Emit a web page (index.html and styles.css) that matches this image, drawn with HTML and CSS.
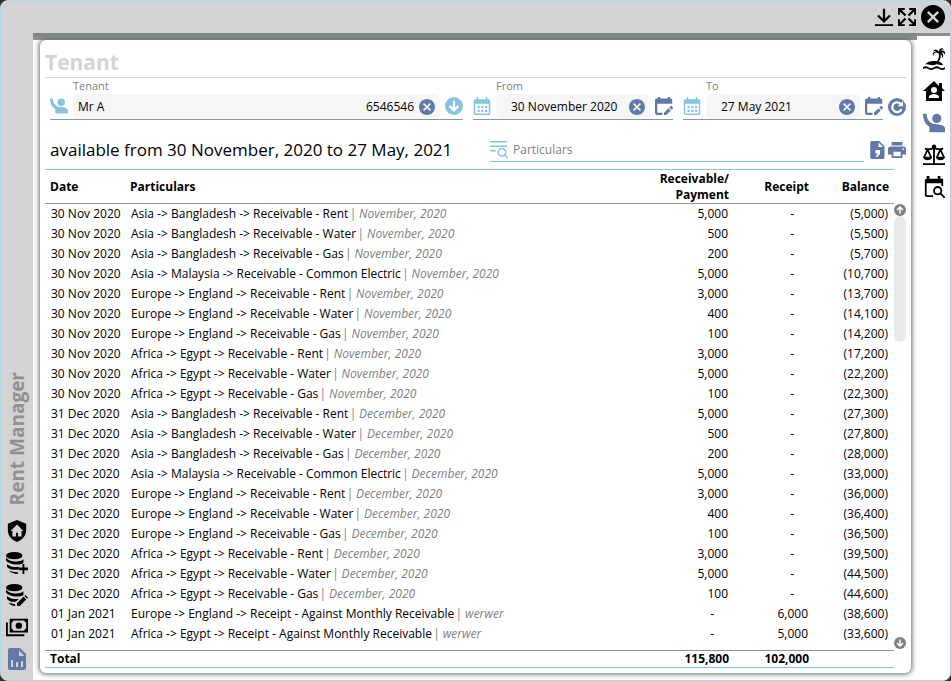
FILE: index.html
```
<!DOCTYPE html>
<html lang="en">
<head>
    <meta charset="UTF-8">
    <meta name="viewport" content="width=device-width, initial-scale=1.0">
    <title>Rent Manager</title>
    <link rel="stylesheet" href="styles.css">
</head>
<body>
    <!-- shared icons -->
    <svg class="sprite" aria-hidden="true">
        <symbol id="clear" viewBox="2 2 20 20"><path d="M12 2C6.47 2 2 6.47 2 12s4.47 10 10 10 10-4.47 10-10S17.53 2 12 2m5 13.59L15.59 17 12 13.41 8.41 17 7 15.59 10.59 12 7 8.41 8.41 7 12 10.59 15.59 7 17 8.41 13.41 12 17 15.59z"/></symbol>
        <symbol id="person" viewBox="0 0 24 24"><circle cx="15" cy="7" r="5"/><path d="M0 2h4c0 5 2 9 7 11 6 0 13 1 13 5v4H7v-6C3 14 0 9 0 2z"/></symbol>
        <symbol id="calendar" viewBox="0 0 24 24"><path fill-rule="evenodd" d="M5 0h2v3h10V0h2v3h2a2 2 0 0 1 2 2v17a2 2 0 0 1-2 2H3a2 2 0 0 1-2-2V5a2 2 0 0 1 2-2h2zM3 9v13h18V9z"/><path d="M6 12h3v3H6zm5 0h3v3h-3zm5 0h3v3h-3zM6 17h3v3H6zm5 0h3v3h-3zm5 0h3v3h-3z"/></symbol>
        <symbol id="calendar-edit" viewBox="0 0 24 24"><path d="M4 0h3v2h10V0h3v2h1a2 2 0 0 1 2 2v5H3v12h7v3H3a3 3 0 0 1-3-3V4a2 2 0 0 1 2-2h2zM12 21v3h3l6-6-3-3zm7-7 3 3 2-2v-1l-2-2h-1z"/></symbol>
        <symbol id="arrow-up" viewBox="0 0 24 24"><circle cx="12" cy="12" r="12"/><path class="line light" d="M12 19V6M6 12l6-6 6 6"/></symbol>
        <symbol id="arrow-down" viewBox="0 0 24 24"><circle cx="12" cy="12" r="12"/><path class="line light" d="M12 5v13M6 12l6 6 6-6"/></symbol>
    </svg>

    <div class="window">
        <header class="topbar">
            <button aria-label="Minimize"><svg viewBox="0 0 24 24"><path class="line" d="M12 1v17M4 10l8 8 8-8M0 23h24"/></svg></button>
            <button aria-label="Full screen"><svg viewBox="0 0 24 24"><path class="line" d="M9 1H1v8M1 1l9 9M15 1h8v8M23 1l-9 9M1 15v8h8M1 23l9-9M23 15v8h-8M23 23l-9-9"/></svg></button>
            <button class="close" aria-label="Close"><svg><use href="#clear"/></svg></button>
        </header>

        <aside class="sidebar">
            <h1>Rent Manager</h1>
            <button aria-label="Home"><svg viewBox="0 0 24 24"><path fill-rule="evenodd" d="M12 0 2 4v7c0 6 4 11 10 13 6-2 10-7 10-13V4zm0 5 7 7h-2v6h-4v-4h-2v4H7v-6H5z"/></svg></button>
            <button aria-label="Add records"><svg viewBox="0 0 24 24"><ellipse cx="9" cy="4" rx="9" ry="4"/><path d="M0 6c3 5 15 6 19 2v4C15 15 3 14 0 9zM1 13c3 3 8 4 13 3v3C8 20 3 19 1 16zM3 20c3 2 6 2 10 2v2c-4 0-8-1-10-4z"/><path d="M18 13h2v4h4v3h-4v4h-2v-4h-4v-3h4z"/></svg></button>
            <button aria-label="Edit records"><svg viewBox="0 0 24 24"><ellipse cx="9" cy="4" rx="9" ry="4"/><path d="M0 6c3 5 15 6 19 2v4C15 15 3 14 0 9zM1 13c3 3 8 4 13 3l-3 3C7 20 3 19 1 16zM3 20c2 1 4 2 7 2v2c-3 0-6-1-7-4z"/><path d="m12 21 7-7 3 3-7 7h-3zm8-8 1-1 3 3-1 1z"/></svg></button>
            <button aria-label="Transactions"><svg viewBox="0 0 24 24"><path class="line" d="M1 7v14h19"/><path fill-rule="evenodd" d="M4 3h20v15H4zm4 2c0 1-1 2-2 2v7c1 0 2 1 2 2h12c0-1 1-2 2-2V7c-1 0-2-1-2-2z"/><circle cx="14" cy="10.500" r="3.500"/></svg></button>
            <button class="active" aria-label="Reports"><svg viewBox="3 1 18 22"><path fill-rule="evenodd" d="M14 9h5.500L14 3.500zM5 1h10l6 6v14a2 2 0 0 1-2 2H5a2 2 0 0 1-2-2V3a2 2 0 0 1 2-2m1 19h2v-7H6zm5 0h2v-5h-2zm5 0h2v-6h-2z"/></svg></button>
        </aside>

        <main class="stage">
            <section class="card">
                <h2>Tenant</h2>

                <form class="filters">
                    <div class="field tenant">
                        <svg class="lead"><use href="#person"/></svg>
                        <div class="box">
                            <label for="tenant">Tenant</label>
                            <div class="value">
                                <input type="text" id="tenant" value="Mr A">
                                <span>6546546</span>
                                <button type="button" aria-label="Clear tenant"><svg><use href="#clear"/></svg></button>
                            </div>
                        </div>
                        <button type="button" class="pick sky" aria-label="Choose tenant"><svg><use href="#arrow-down"/></svg></button>
                    </div>
                    <div class="field date">
                        <svg class="lead"><use href="#calendar"/></svg>
                        <div class="box">
                            <label for="from">From</label>
                            <div class="value">
                                <input type="text" id="from" value="30 November 2020">
                                <button type="button" aria-label="Clear from date"><svg><use href="#clear"/></svg></button>
                            </div>
                        </div>
                        <button type="button" class="pick" aria-label="Pick from date"><svg><use href="#calendar-edit"/></svg></button>
                    </div>
                    <div class="field date">
                        <svg class="lead"><use href="#calendar"/></svg>
                        <div class="box">
                            <label for="to">To</label>
                            <div class="value">
                                <input type="text" id="to" value="27 May 2021">
                                <button type="button" aria-label="Clear to date"><svg><use href="#clear"/></svg></button>
                            </div>
                        </div>
                        <button type="button" class="pick" aria-label="Pick to date"><svg><use href="#calendar-edit"/></svg></button>
                    </div>
                    <button type="button" class="refresh" aria-label="Refresh"><svg viewBox="0 0 24 24"><circle cx="12" cy="12" r="12"/><path class="line light" d="M17 8a6.500 6.500 0 1 0 1 7"/><path class="light-fill" d="M20 4v7h-7z"/></svg></button>
                </form>

                <div class="summary">
                    <h3>available from 30 November, 2020 to 27 May, 2021</h3>
                    <div class="search">
                        <svg viewBox="0 0 24 24"><path d="M0 0h23v2H0zm0 6h23v2H0zm0 6h8v2H0z"/><circle class="line" cx="16" cy="15" r="5"/><path class="line" d="m19 18 5 5"/></svg>
                        <input type="text" aria-label="Particulars" placeholder="Particulars">
                    </div>
                    <button aria-label="Export"><svg viewBox="0 0 24 24"><path fill-rule="evenodd" d="M5 0h10l7 7v15a2 2 0 0 1-2 2H5a2 2 0 0 1-2-2V2a2 2 0 0 1 2-2m9 2v6h6zM10 12v5h3l-3 4h3l3-4v-5z"/></svg></button>
                    <button aria-label="Print"><svg viewBox="2 2 20 20"><path d="M18 3H6v4h12m1 5a1 1 0 0 1-1-1 1 1 0 0 1 1-1 1 1 0 0 1 1 1 1 1 0 0 1-1 1m-3 7H8v-5h8m3-6H5a3 3 0 0 0-3 3v6h4v4h12v-4h4v-6a3 3 0 0 0-3-3z"/></svg></button>
                </div>

                <div class="ledger">
                    <table>
                        <thead>
                            <tr><th>Date</th><th>Particulars</th><th>Receivable/<br>Payment</th><th>Receipt</th><th>Balance</th></tr>
                        </thead>
                        <tbody>
                            <tr><td>30 Nov 2020</td><td>Asia -&gt; Bangladesh -&gt; Receivable - Rent<i>| November, 2020</i></td><td>5,000</td><td class="nil">-</td><td>(5,000)</td></tr>
                            <tr><td>30 Nov 2020</td><td>Asia -&gt; Bangladesh -&gt; Receivable - Water<i>| November, 2020</i></td><td>500</td><td class="nil">-</td><td>(5,500)</td></tr>
                            <tr><td>30 Nov 2020</td><td>Asia -&gt; Bangladesh -&gt; Receivable - Gas<i>| November, 2020</i></td><td>200</td><td class="nil">-</td><td>(5,700)</td></tr>
                            <tr><td>30 Nov 2020</td><td>Asia -&gt; Malaysia -&gt; Receivable - Common Electric<i>| November, 2020</i></td><td>5,000</td><td class="nil">-</td><td>(10,700)</td></tr>
                            <tr><td>30 Nov 2020</td><td>Europe -&gt; England -&gt; Receivable - Rent<i>| November, 2020</i></td><td>3,000</td><td class="nil">-</td><td>(13,700)</td></tr>
                            <tr><td>30 Nov 2020</td><td>Europe -&gt; England -&gt; Receivable - Water<i>| November, 2020</i></td><td>400</td><td class="nil">-</td><td>(14,100)</td></tr>
                            <tr><td>30 Nov 2020</td><td>Europe -&gt; England -&gt; Receivable - Gas<i>| November, 2020</i></td><td>100</td><td class="nil">-</td><td>(14,200)</td></tr>
                            <tr><td>30 Nov 2020</td><td>Africa -&gt; Egypt -&gt; Receivable - Rent<i>| November, 2020</i></td><td>3,000</td><td class="nil">-</td><td>(17,200)</td></tr>
                            <tr><td>30 Nov 2020</td><td>Africa -&gt; Egypt -&gt; Receivable - Water<i>| November, 2020</i></td><td>5,000</td><td class="nil">-</td><td>(22,200)</td></tr>
                            <tr><td>30 Nov 2020</td><td>Africa -&gt; Egypt -&gt; Receivable - Gas<i>| November, 2020</i></td><td>100</td><td class="nil">-</td><td>(22,300)</td></tr>
                            <tr><td>31 Dec 2020</td><td>Asia -&gt; Bangladesh -&gt; Receivable - Rent<i>| December, 2020</i></td><td>5,000</td><td class="nil">-</td><td>(27,300)</td></tr>
                            <tr><td>31 Dec 2020</td><td>Asia -&gt; Bangladesh -&gt; Receivable - Water<i>| December, 2020</i></td><td>500</td><td class="nil">-</td><td>(27,800)</td></tr>
                            <tr><td>31 Dec 2020</td><td>Asia -&gt; Bangladesh -&gt; Receivable - Gas<i>| December, 2020</i></td><td>200</td><td class="nil">-</td><td>(28,000)</td></tr>
                            <tr><td>31 Dec 2020</td><td>Asia -&gt; Malaysia -&gt; Receivable - Common Electric<i>| December, 2020</i></td><td>5,000</td><td class="nil">-</td><td>(33,000)</td></tr>
                            <tr><td>31 Dec 2020</td><td>Europe -&gt; England -&gt; Receivable - Rent<i>| December, 2020</i></td><td>3,000</td><td class="nil">-</td><td>(36,000)</td></tr>
                            <tr><td>31 Dec 2020</td><td>Europe -&gt; England -&gt; Receivable - Water<i>| December, 2020</i></td><td>400</td><td class="nil">-</td><td>(36,400)</td></tr>
                            <tr><td>31 Dec 2020</td><td>Europe -&gt; England -&gt; Receivable - Gas<i>| December, 2020</i></td><td>100</td><td class="nil">-</td><td>(36,500)</td></tr>
                            <tr><td>31 Dec 2020</td><td>Africa -&gt; Egypt -&gt; Receivable - Rent<i>| December, 2020</i></td><td>3,000</td><td class="nil">-</td><td>(39,500)</td></tr>
                            <tr><td>31 Dec 2020</td><td>Africa -&gt; Egypt -&gt; Receivable - Water<i>| December, 2020</i></td><td>5,000</td><td class="nil">-</td><td>(44,500)</td></tr>
                            <tr><td>31 Dec 2020</td><td>Africa -&gt; Egypt -&gt; Receivable - Gas<i>| December, 2020</i></td><td>100</td><td class="nil">-</td><td>(44,600)</td></tr>
                            <tr><td>01 Jan 2021</td><td>Europe -&gt; England -&gt; Receipt - Against Monthly Receivable<i>| werwer</i></td><td class="nil">-</td><td>6,000</td><td>(38,600)</td></tr>
                            <tr><td>01 Jan 2021</td><td>Africa -&gt; Egypt -&gt; Receipt - Against Monthly Receivable<i>| werwer</i></td><td class="nil">-</td><td>5,000</td><td>(33,600)</td></tr>
                        </tbody>
                        <tfoot>
                            <tr><td>Total</td><td></td><td>115,800</td><td>102,000</td><td></td></tr>
                        </tfoot>
                    </table>
                    <div class="scrollbar">
                        <button aria-label="Scroll up"><svg><use href="#arrow-up"/></svg></button>
                        <div class="track"><div class="thumb"></div></div>
                        <button aria-label="Scroll down"><svg><use href="#arrow-down"/></svg></button>
                    </div>
                </div>
            </section>
        </main>

        <nav class="views">
            <button aria-label="Plots"><svg viewBox="0 0 24 24"><path d="M0 21q3-2 6 0 3 2 6 0 3-2 6 0 3 2 6 0v2q-3 2-6 0-3-2-6 0-3 2-6 0-3-2-6 0zM2 18c4-5 16-5 20 0-3 2-5-1-8 0-4 2-8-1-12 0zM15 15c2-3 3-6 2-9l2-1c1 4 0 8-2 10z"/><path d="M17 6c-3-2-5-1-6 3-1-3 0-5 3-5-1-1-2-1-3 0 1-3 4-3 6 0 1-4 4-5 6-2-2-1-3 0-4 1 4-1 6 1 5 5-1-3-2-3-4-3 2 1 3 4 1 6 0-3-1-5-4-5z"/></svg></button>
            <button aria-label="Spaces"><svg viewBox="1 1 22 22"><path fill-rule="evenodd" d="M12 2 1 12h3v10h16V12h3l-3-3V4h-3v3zm0 6a3 3 0 0 1 3 3 3 3 0 0 1-3 3 3 3 0 0 1-3-3 3 3 0 0 1 3-3m5 11H7v-1c0-2 3-3 5-3s5 1 5 3z"/></svg></button>
            <button class="active" aria-label="Tenants"><svg><use href="#person"/></svg></button>
            <button aria-label="Balance"><svg viewBox="0 0 24 24"><path class="line" d="M12 3v18M0 22h24M2 5c4 1 7 1 10-1 3 2 6 2 10 1M5 6l-4 9M5 6l4 9M19 6l-4 9M19 6l4 9"/><path d="M0 14h10c0 5-10 5-10 0zm14 0h10c0 5-10 5-10 0z"/><circle cx="12" cy="3" r="2.500"/></svg></button>
            <button aria-label="Schedule"><svg viewBox="0 0 24 24"><path d="M4 0h3v3h9V0h3v3h3v8h-2V8H4v13h7v2H4a2 2 0 0 1-2-2V5a2 2 0 0 1 2-2z"/><circle class="line" cx="16" cy="16" r="4"/><path class="line" d="m19 19 5 5"/></svg></button>
        </nav>
    </div>
</body>
</html>
```
FILE: styles.css
```
* {
    box-sizing: border-box;
}

body {
    margin: 0;
    background: #333;
    font-family: "Open Sans", "Noto Sans", sans-serif;
    font-size: 12px;
    color: #000;
}

h1, h2, h3 {
    margin: 0;
}

button {
    display: flex;
    padding: 0;
    border: none;
    background: none;
    color: inherit;
    cursor: pointer;
}

svg {
    display: block;
    width: 100%;
    height: 100%;
    fill: currentColor;
}

.sprite {
    position: absolute;
    width: 0;
    height: 0;
}

.line {
    fill: none;
    stroke: currentColor;
    stroke-width: 2;
}

.light {
    stroke: #fff;
    stroke-width: 3;
}

.light-fill {
    fill: #fff;
}

.window {
    display: grid;
    grid-template: 32px 1fr / 32px 1fr 33px;
    height: 100vh;
    border: 1px solid #add8e6;
    border-radius: 8px;
    background: #fff;
    overflow: hidden;
}

.topbar {
    grid-column: 1 / -1;
    display: flex;
    justify-content: flex-end;
    align-items: center;
    gap: 5px;
    padding-right: 5px;
    background: #d3d3d3;
}

.topbar button {
    width: 18px;
    height: 18px;
}

.topbar .line {
    stroke-width: 3;
}

.topbar .close {
    width: 24px;
    height: 24px;
}

.sidebar {
    display: flex;
    flex-direction: column;
    justify-content: flex-end;
    align-items: center;
    gap: 10px;
    padding-bottom: 10px;
    background: #d3d3d3;
}

.sidebar h1 {
    writing-mode: vertical-rl;
    transform: rotate(180deg);
    margin-bottom: 5px;
    font-size: 19px;
    line-height: 24px;
    color: #909090;
}

.sidebar button, .views button {
    width: 22px;
    height: 22px;
}

.active {
    color: #6478a8;
}

.stage {
    display: flex;
    min-height: 0;
    padding: 7px 6px 7px 7px;
    background: linear-gradient(#7d8484, #8c9499 7px, #fff 7px);
}

.card {
    flex: 1;
    display: flex;
    flex-direction: column;
    min-width: 0;
    padding: 7px 5px 5px;
    border-radius: 6px;
    background: #fff;
    box-shadow: 0 0 5px 1px #5c686e;
}

.card h2 {
    border-bottom: 1px solid #d3d3d3;
    font-size: 21px;
    line-height: 30px;
    color: #d3d3d3;
}

.filters {
    display: flex;
    align-items: flex-end;
    gap: 10px;
    padding-left: 5px;
}

.field {
    display: flex;
    align-items: flex-end;
    gap: 5px;
    border-bottom: 1px solid #8c969c;
}

.field.tenant {
    flex: 1;
}

.field.date {
    width: 200px;
}

.lead {
    width: 18px;
    height: 18px;
    margin-bottom: 4px;
    color: #87c5de;
}

.box {
    flex: 1;
    min-width: 0;
}

.box label {
    display: block;
    font-size: 11px;
    line-height: 16px;
    color: #808080;
}

.value {
    display: flex;
    align-items: center;
    gap: 5px;
    height: 25px;
    padding: 0 5px;
    border-radius: 5px;
    background: #f6f6f6;
}

.value input, .search input {
    flex: 1;
    min-width: 0;
    padding: 0;
    border: none;
    outline: none;
    background: none;
    font: inherit;
}

.date input {
    padding-left: 10px;
}

.value button {
    width: 16px;
    height: 16px;
    color: #6478a8;
}

.pick, .refresh {
    width: 18px;
    height: 18px;
    margin-bottom: 4px;
    color: #6478a8;
}

.sky {
    color: #87c5de;
}

.refresh {
    margin-left: -5px;
}

.summary {
    display: flex;
    align-items: center;
    gap: 2px;
    padding: 18px 0 7px 5px;
}

.summary h3 {
    width: 438px;
    font-size: 17px;
    font-weight: 400;
    line-height: 24px;
    white-space: nowrap;
}

.search {
    flex: 1;
    display: flex;
    align-items: center;
    gap: 5px;
    height: 24px;
    margin-right: 2px;
    border-bottom: 1px solid #87c5de;
}

.search svg {
    width: 18px;
    height: 18px;
    color: #87c5de;
}

.search input::placeholder {
    color: #808080;
}

.summary button {
    width: 18px;
    height: 18px;
    color: #6478a8;
}

.ledger {
    flex: 1;
    display: flex;
    min-height: 0;
}

.ledger table {
    flex: 1;
    display: flex;
    flex-direction: column;
    min-height: 0;
}

thead, tfoot {
    display: block;
    border-top: 1px solid #87c5de;
    border-bottom: 1px solid #8c969c;
    font-weight: 700;
}

thead {
    padding-top: 1px;
}

tfoot {
    border-top-color: #8c969c;
    border-bottom-color: #87c5de;
}

tbody {
    flex: 1;
    display: block;
    min-height: 0;
    padding: 0 1px;
    overflow: hidden;
}

tr {
    display: grid;
    grid-template-columns: 80px 1fr 90px 80px 80px;
    align-items: center;
    padding: 0 5px;
}

th, td {
    padding: 0;
    text-align: right;
    white-space: nowrap;
}

th {
    line-height: 16px;
}

td {
    line-height: 20px;
}

tfoot td {
    line-height: 16px;
}

th:nth-child(-n+2), td:nth-child(-n+2) {
    text-align: left;
}

td.nil {
    padding-right: 14px;
}

td i {
    margin-left: 1px;
    color: #808080;
}

.scrollbar {
    display: flex;
    flex-direction: column;
    width: 12px;
    padding: 35px 0 19px;
}

.scrollbar button {
    width: 12px;
    height: 12px;
    color: #808080;
}

.track {
    flex: 1;
}

.thumb {
    height: 30%;
    border-radius: 6px;
    background: #e9e9e9;
}

.views {
    display: flex;
    flex-direction: column;
    align-items: center;
    gap: 10px;
    padding-top: 12px;
    border-top: 3px solid #8a9092;
}
```
